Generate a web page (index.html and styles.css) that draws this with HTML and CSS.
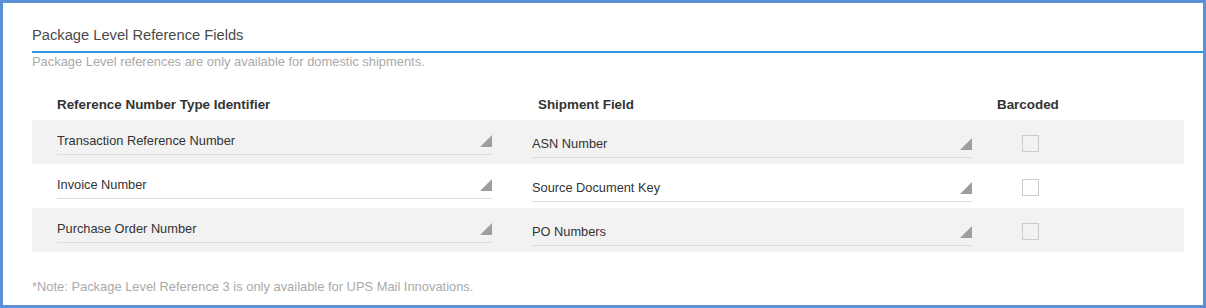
FILE: index.html
```html
<!DOCTYPE html>
<html lang="en">
<head>
  <meta charset="UTF-8" />
  <title>Package Level Reference Fields</title>
  <link rel="stylesheet" href="styles.css">
</head>
<body>
<div class="panel">
  <h3 class="panel-title">Package Level Reference Fields</h3>
  <p class="panel-sub">Package Level references are only available for domestic shipments.</p>

  <div class="ref-grid ref-head">
    <div>Reference Number Type Identifier</div>
    <div class="head-field">Shipment Field</div>
    <div>Barcoded</div>
  </div>

  <div class="ref-grid ref-row shaded">
    <div class="select"><span>Transaction Reference Number</span><i class="caret"></i></div>
    <div class="select low"><span>ASN Number</span><i class="caret"></i></div>
    <div class="check-cell"><span class="check"></span></div>
  </div>
  <div class="ref-grid ref-row">
    <div class="select"><span>Invoice Number</span><i class="caret"></i></div>
    <div class="select low"><span>Source Document Key</span><i class="caret"></i></div>
    <div class="check-cell"><span class="check"></span></div>
  </div>
  <div class="ref-grid ref-row shaded">
    <div class="select"><span>Purchase Order Number</span><i class="caret"></i></div>
    <div class="select low"><span>PO Numbers</span><i class="caret"></i></div>
    <div class="check-cell"><span class="check"></span></div>
  </div>

  <p class="panel-note">*Note: Package Level Reference 3 is only available for UPS Mail Innovations.</p>
</div>
</body>
</html>
```

FILE: styles.css
```css
:root { --frame:#5b8fd6; --accent:#2f96e6; --text:#333; --muted:#aaa; --shade:#f2f2f2; --line:#ddd; }
* { box-sizing: border-box; }
body { margin:0; font-family:'Liberation Sans', Arial, sans-serif; color:var(--text); background:#fff; }
.panel { height:308px; border:3px solid var(--frame); padding:22px 0 0 29px; }
.panel-title { margin:0; font-size:14.7px; font-weight:normal; line-height:20px; color:#4a4a4a; padding-bottom:6px; border-bottom:2px solid var(--accent); }
.panel-sub { margin:2px 0 0; font-size:12.9px; line-height:14px; color:var(--muted); }
.ref-grid { display:grid; grid-template-columns:435px 440px 1fr; column-gap:40px; padding-left:25px; margin-right:19px; }
.ref-grid > :nth-child(3) { margin-left:-15px; }
.ref-head { margin-top:28px; margin-bottom:7px; font-size:13.4px; font-weight:bold; line-height:16px; }
.head-field { padding-left:6px; }
.ref-row { height:44px; font-size:12.8px; }
.ref-row.shaded { background:var(--shade); }
.select { display:flex; align-items:center; height:28px; margin-top:7px; border-bottom:1px solid var(--line); }
.select.low { margin-top:10px; }
.caret { margin-left:auto; width:0; height:0; border-left:12px solid transparent; border-bottom:12px solid #9e9e9e; }
.check-cell { display:flex; align-items:center; }
.check { width:17px; height:17px; margin:3px 0 0 25px; border:1px solid #ccc; }
.panel-note { margin:28px 0 0; font-size:12.9px; line-height:14px; color:var(--muted); }
```
